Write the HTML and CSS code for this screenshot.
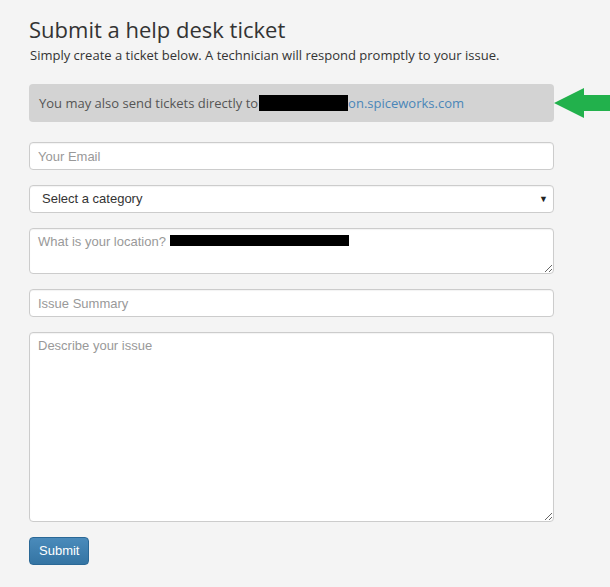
FILE: index.html
```html
<!DOCTYPE html>
<html>
<head>
<meta charset="utf-8">
<link rel="stylesheet" href="styles.css">
</head>
<body>
<div class="page">
  <h1 class="title">Submit a help desk ticket</h1>
  <p class="lead">Simply create a ticket below. A technician will respond promptly to your issue.</p>
  <div class="notice">
    You may also send tickets directly to<span class="redact redact-email"></span><a class="link" href="#">on.spiceworks.com</a>
    <svg class="arrow" width="57" height="32" viewBox="0 0 57 32"><path d="M0 16 L30 1 L30 8 L57 8 L57 24 L30 24 L30 31 Z" fill="#22b14c"/></svg>
  </div>
  <form class="form">
    <input class="field" type="text" placeholder="Your Email">
    <div class="select-wrap">
      <select class="field select"><option>Select a category</option></select>
      <span class="caret">&#9660;</span>
    </div>
    <div class="area-wrap">
      <textarea class="field area-location" placeholder="What is your location?"></textarea>
      <span class="redact redact-location"></span>
    </div>
    <input class="field" type="text" placeholder="Issue Summary">
    <textarea class="field area-issue" placeholder="Describe your issue"></textarea>
    <div class="actions"><button class="btn" type="button">Submit</button></div>
  </form>
</div>
</body>
</html>
```
FILE: styles.css
```css
html, body {
  margin: 0;
  padding: 0;
  background: #f4f4f4;
}
.page {
  width: 525px;
  padding: 16px 0 0 29px;
  font-family: "Open Sans", "Liberation Sans", sans-serif;
  color: #333;
}
.title {
  margin: 0;
  font-size: 22px;
  font-weight: 400;
  line-height: 26px;
  color: #333;
}
.lead {
  margin: 4px 0 0 1px;
  font-size: 13px;
  line-height: 18px;
}
.notice {
  position: relative;
  margin-top: 20px;
  background: #d3d3d3;
  border-radius: 4px;
  padding: 10px 10px;
  font-size: 13px;
  line-height: 18px;
  color: #555;
}
.link {
  color: #4a86b8;
  text-decoration: none;
}
.redact {
  display: inline-block;
  background: #000;
}
.redact-email {
  width: 89px;
  height: 16px;
  margin-left: 1px;
  vertical-align: -3px;
}
.arrow {
  position: absolute;
  left: 525px;
  top: 3px;
}
.form {
  display: flex;
  flex-direction: column;
  gap: 15px;
  margin-top: 20px;
}
.field {
  box-sizing: border-box;
  width: 525px;
  height: 28px;
  margin: 0;
  border: 1px solid #ccc;
  border-radius: 4px;
  background: #fff;
  padding: 4px 8px;
  font-family: "Liberation Sans", Arial, sans-serif;
  font-size: 13px;
  line-height: 18px;
  color: #333;
  box-shadow: inset 0 1px 1px rgba(0,0,0,0.05);
  outline: none;
}
.field::placeholder {
  color: #999;
}
.select-wrap, .area-wrap {
  position: relative;
  display: flex;
}
.select {
  appearance: none;
  -webkit-appearance: none;
  padding-left: 12px;
}
.caret {
  position: absolute;
  right: 6px;
  top: 8px;
  font-size: 9px;
  line-height: 12px;
  color: #222;
  pointer-events: none;
}
.area-location {
  height: 46px;
  resize: vertical;
}
.redact-location {
  position: absolute;
  left: 141px;
  top: 7px;
  width: 179px;
  height: 11px;
}
.area-issue {
  height: 190px;
  resize: vertical;
}
.actions {
  display: flex;
}
.btn {
  height: 28px;
  padding: 0 9px;
  border: 1px solid #2a6896;
  border-radius: 4px;
  background: linear-gradient(#4a8bbb, #3474a3);
  color: #fff;
  font-family: "Liberation Sans", Arial, sans-serif;
  font-size: 13px;
  line-height: 18px;
}
```
